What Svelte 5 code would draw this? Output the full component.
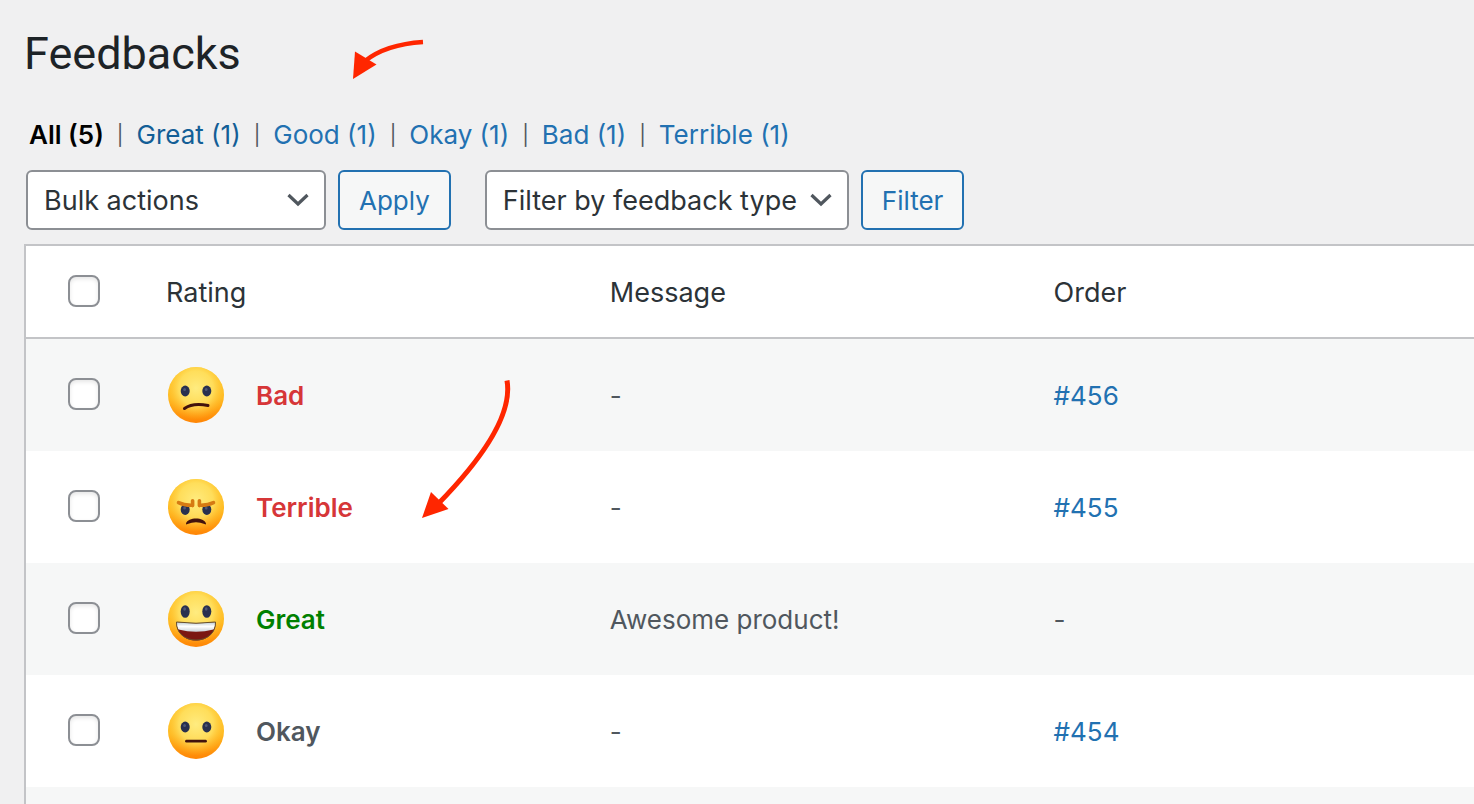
<script lang="ts">
    type Mood = "bad" | "terrible" | "great" | "okay";

    const views = [
        { label: "All", count: 5 },
        { label: "Great", count: 1 },
        { label: "Good", count: 1 },
        { label: "Okay", count: 1 },
        { label: "Bad", count: 1 },
        { label: "Terrible", count: 1 },
    ];

    const feedbacks: { mood: Mood; label: string; message: string; order: string }[] = [
        { mood: "bad", label: "Bad", message: "-", order: "#456" },
        { mood: "terrible", label: "Terrible", message: "-", order: "#455" },
        { mood: "great", label: "Great", message: "Awesome product!", order: "-" },
        { mood: "okay", label: "Okay", message: "-", order: "#454" },
    ];

    let currentView = $state("All");
    let selected = $state(feedbacks.map(() => false));

    function toggleAll(event: Event) {
        const checked = (event.currentTarget as HTMLInputElement).checked;
        selected = feedbacks.map(() => checked);
    }
</script>

{#snippet chevron()}
    <svg class="chevron" viewBox="0 0 24 16" aria-hidden="true">
        <path d="M2.5 3 L12 12 L21.5 3" fill="none" stroke="#50575e" stroke-width="3.2" />
    </svg>
{/snippet}

{#snippet face(mood: Mood)}
    <svg class="face" viewBox="0 0 56 56" aria-hidden="true">
        <circle cx="28" cy="28" r="28" fill="url(#skin)" />
        <circle cx="28" cy="28" r="28" fill="url(#shade)" />
        {#if mood === "great"}
            <ellipse cx="17.2" cy="20.5" rx="4.5" ry="6.3" fill="#29304f" />
            <ellipse cx="38.8" cy="20.5" rx="4.5" ry="6.3" fill="#29304f" />
            <ellipse cx="16.6" cy="18" rx="1.4" ry="1.8" fill="#4d5676" />
            <ellipse cx="38.2" cy="18" rx="1.4" ry="1.8" fill="#4d5676" />
            <path d="M8.5 31 Q28 33.5 47.5 31 C48 42 39 49.5 28 49.5 C17 49.5 8 42 8.5 31Z" fill="#7b1712" />
            <path d="M8.5 31 Q28 33.5 47.5 31 C47.5 34 46.8 36.5 45.5 38.5 Q28 43 10.5 38.5 C9.2 36.5 8.5 34 8.5 31Z" fill="url(#teeth)" />
            <path d="M8.5 31 Q28 33.5 47.5 31 C48 42 39 49 28 49 C17 49 8 42 8.5 31Z" fill="none" stroke="#67502c" stroke-width="1" />
        {:else}
            {@const eyeY = mood === "terrible" ? 30.5 : 24}
            <ellipse cx="17.2" cy={eyeY} rx="4.5" ry="5.4" fill="#29304f" />
            <ellipse cx="38.8" cy={eyeY} rx="4.5" ry="5.4" fill="#29304f" />
            <ellipse cx="16.6" cy={eyeY - 1.5} rx="1.4" ry="1.6" fill="#4d5676" />
            <ellipse cx="38.2" cy={eyeY - 1.5} rx="1.4" ry="1.6" fill="#4d5676" />
        {/if}
        {#if mood === "bad"}
            <path d="M16.5 41.5 C22 37.5 31 36.8 40 38.5" fill="none" stroke="#42120d" stroke-width="3" stroke-linecap="round" />
        {:else if mood === "okay"}
            <path d="M18.5 38.2 H37.5" stroke="#42120d" stroke-width="2.8" stroke-linecap="round" />
        {:else if mood === "terrible"}
            <path d="M10.5 23.6 Q16 26.4 24 26.2 M24.6 21.8 V26.6" fill="none" stroke="#d67a12" stroke-width="3.6" stroke-linecap="round" />
            <path d="M45.5 23.6 Q40 26.4 32 26.2 M31.4 21.8 V26.6" fill="none" stroke="#d67a12" stroke-width="3.6" stroke-linecap="round" />
            <path d="M18 44.5 C20 37.8 36 37.8 38 44.5 Q38 46 36.5 45 Q28 41.5 19.5 45 Q18 46 18 44.5Z" fill="#42120d" />
        {/if}
    </svg>
{/snippet}

<svg class="defs" aria-hidden="true">
    <defs>
        <linearGradient id="skin" x1="0" y1="0" x2="0" y2="1">
            <stop offset="0" stop-color="#ffcb30" />
            <stop offset="0.55" stop-color="#ffb81f" />
            <stop offset="1" stop-color="#ff8505" />
        </linearGradient>
        <radialGradient id="shade" cx="0.5" cy="0.38" r="0.56">
            <stop offset="0" stop-color="#ffec80" />
            <stop offset="0.55" stop-color="#ffe263" stop-opacity="0.85" />
            <stop offset="1" stop-color="#ffc02a" stop-opacity="0" />
        </radialGradient>
        <linearGradient id="teeth" x1="0" y1="0" x2="0" y2="1">
            <stop offset="0" stop-color="#b9c9d3" />
            <stop offset="0.45" stop-color="#ffffff" />
            <stop offset="1" stop-color="#c8d1d8" />
        </linearGradient>
    </defs>
</svg>

<main class="wrap">
    <h1>Feedbacks</h1>

    <ul class="views">
        {#each views as view (view.label)}
            <li>
                <a
                    href="#{view.label.toLowerCase()}"
                    class:current={currentView === view.label}
                    class:hovered={view.label === "Great"}
                    onclick={() => (currentView = view.label)}
                >{view.label} ({view.count})</a>
            </li>
        {/each}
    </ul>

    <div class="tablenav">
        <div class="picker bulk">
            <select aria-label="Bulk actions">
                <option>Bulk actions</option>
            </select>
            {@render chevron()}
        </div>
        <button type="button">Apply</button>
        <div class="picker type">
            <select aria-label="Filter by feedback type">
                <option>Filter by feedback type</option>
            </select>
            {@render chevron()}
        </div>
        <button type="button">Filter</button>
    </div>

    <div class="list">
        <table>
            <thead>
                <tr>
                    <td class="check">
                        <input type="checkbox" aria-label="Select all" onchange={toggleAll} />
                    </td>
                    <th class="rating" scope="col">Rating</th>
                    <th class="message" scope="col">Message</th>
                    <th scope="col">Order</th>
                </tr>
            </thead>
            <tbody>
                {#each feedbacks as item, i (item.mood)}
                    <tr>
                        <td class="check">
                            <input type="checkbox" aria-label="Select {item.label}" bind:checked={selected[i]} />
                        </td>
                        <td>
                            <div class="mood {item.mood}">
                                {@render face(item.mood)}
                                <strong>{item.label}</strong>
                            </div>
                        </td>
                        <td>{item.message}</td>
                        <td>
                            {#if item.order.startsWith("#")}
                                <a href={item.order}>{item.order}</a>
                            {:else}
                                {item.order}
                            {/if}
                        </td>
                    </tr>
                {/each}
            </tbody>
        </table>
    </div>

    <!-- Callout arrows -->
    <svg class="arrow arrow-views" viewBox="0 0 80 50" aria-hidden="true">
        <path d="M73 7 C50 8.5 30 14 15 26" fill="none" stroke="#ff2600" stroke-width="4.5" />
        <path d="M5 16.5 L26.5 29.5 L3 44Z" fill="#ff2600" />
    </svg>
    <svg class="arrow arrow-rows" viewBox="0 0 100 150" aria-hidden="true">
        <path d="M87 10.5 C93 45 62 89 18 134" fill="none" stroke="#ff2600" stroke-width="5" />
        <path d="M11 122 L28.5 139 L2 148Z" fill="#ff2600" />
    </svg>
</main>

<style>
    :global(body) {
        margin: 0;
        background: #f0f0f1;
    }

    .wrap {
        position: relative;
        display: flex;
        flex-direction: column;
        box-sizing: border-box;
        height: 100vh;
        padding: 24px 0 0 24px;
        overflow: hidden;
        font-family: Inter, "Liberation Sans", sans-serif;
        font-size: 26px;
        color: #50575e;
    }

    .defs {
        position: absolute;
        width: 0;
        height: 0;
    }

    h1 {
        margin: 0;
        font-family: Roboto, "Liberation Sans", sans-serif;
        font-size: 45px;
        font-weight: 400;
        line-height: 60px;
        color: #1d2327;
    }

    a {
        color: #2271b1;
        text-decoration: none;
    }

    /* Status links */
    .views {
        display: flex;
        margin: 31px 0 0;
        padding: 0 0 0 5px;
        list-style: none;
        line-height: 40px;
    }

    .views li {
        display: flex;
        align-items: center;
    }

    .views li:not(:last-child)::after {
        content: "|";
        margin: 0 13px;
        font-size: 20px;
    }

    .views .hovered {
        color: #135e96;
    }

    .views .current {
        font-weight: 600;
        color: #000;
    }

    /* Bulk actions and filter */
    .tablenav {
        display: flex;
        gap: 12px;
        margin: 15px 0 14px;
        padding-left: 2px;
    }

    .picker {
        position: relative;
    }

    .bulk {
        width: 300px;
    }

    .type {
        width: 364px;
        margin-left: 22px;
    }

    select {
        width: 100%;
        height: 60px;
        padding: 0 44px 0 16px;
        appearance: none;
        border: 2px solid #8c8f94;
        border-radius: 6px;
        background: #fff;
        color: #2c3338;
        font-family: inherit;
        font-size: 27px;
    }

    .chevron {
        position: absolute;
        top: 22px;
        right: 16px;
        width: 24px;
        height: 16px;
        pointer-events: none;
    }

    button {
        height: 60px;
        padding: 0 19px;
        border: 2px solid #2271b1;
        border-radius: 6px;
        background: #f6f7f7;
        color: #2271b1;
        font-family: inherit;
        font-size: 26px;
    }

    /* List table */
    .list {
        flex: 1;
        border: 2px solid #c3c4c7;
        border-width: 2px 0 0 2px;
        background: #f6f7f7;
    }

    table {
        width: 100%;
        table-layout: fixed;
        border-collapse: separate;
        border-spacing: 0;
    }

    th,
    td {
        box-sizing: border-box;
        height: 112px;
        padding: 0 16px;
        text-align: left;
        vertical-align: middle;
    }

    thead th,
    thead td {
        height: 93px;
        border-bottom: 2px solid #c3c4c7;
        background: #fff;
        color: #2c3338;
        font-size: 27px;
        font-weight: 400;
    }

    thead th {
        padding-top: 2px;
    }

    tbody tr:nth-child(even) {
        background: #fff;
    }

    .check {
        width: 124px;
        padding: 0 0 2px 42px;
        font-size: 0;
    }

    .rating,
    .message {
        width: 30.65%;
    }

    input {
        box-sizing: border-box;
        width: 32px;
        height: 32px;
        margin: 0;
        appearance: none;
        border: 2px solid #8c8f94;
        border-radius: 8px;
        background: #fff;
        box-shadow: inset 0 2px 4px rgba(0, 0, 0, 0.1);
    }

    input:checked {
        background: #2271b1;
    }

    .mood {
        display: flex;
        align-items: center;
        gap: 32px;
        padding-left: 2px;
    }

    .mood strong {
        font-weight: 600;
    }

    .bad,
    .terrible {
        color: #d63638;
    }

    .great {
        color: #008000;
    }

    .face {
        width: 56px;
        height: 56px;
    }

    /* Arrows float over the page */
    .arrow {
        position: absolute;
        pointer-events: none;
    }

    .arrow-views {
        top: 35px;
        left: 350px;
        width: 80px;
    }

    .arrow-rows {
        top: 370px;
        left: 420px;
        width: 100px;
    }
</style>
